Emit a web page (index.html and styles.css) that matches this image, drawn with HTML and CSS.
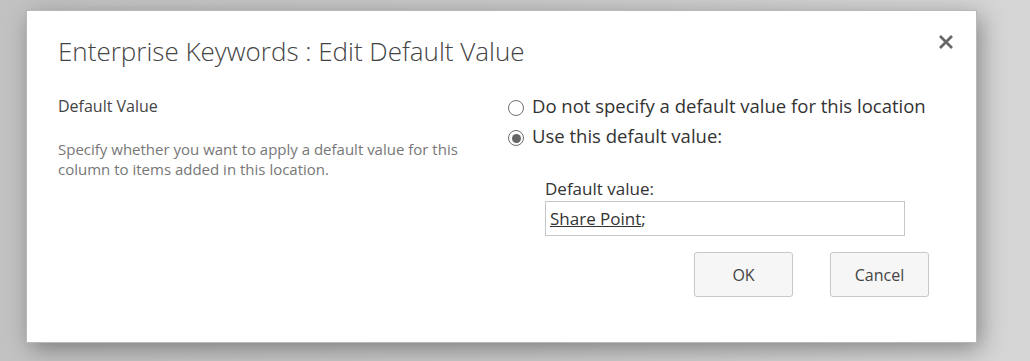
FILE: index.html
```html
<!DOCTYPE html>
<html>
<head>
<meta charset="utf-8">
<link rel="stylesheet" href="styles.css">
</head>
<body>
<div class="page">
  <div class="dialog">
    <div class="header">
      <h1 class="title">Enterprise Keywords : Edit Default Value</h1>
      <button class="close" aria-label="Close">
        <svg width="16" height="16" viewBox="0 0 16 16"><path d="M2 2 L14 14 M14 2 L2 14" stroke="#666" stroke-width="2.8" fill="none"/></svg>
      </button>
    </div>
    <div class="body">
      <div class="left">
        <div class="section-title">Default Value</div>
        <div class="section-desc">Specify whether you want to apply a default value for this column to items added in this location.</div>
      </div>
      <div class="right">
        <label class="radio-row"><span class="radio"></span><span class="radio-label">Do not specify a default value for this location</span></label>
        <label class="radio-row"><span class="radio checked"></span><span class="radio-label">Use this default value:</span></label>
        <div class="field">
          <div class="field-label">Default value:</div>
          <div class="field-input"><span class="token">Share Point</span>;</div>
        </div>
        <div class="buttons">
          <button class="btn">OK</button>
          <button class="btn">Cancel</button>
        </div>
      </div>
    </div>
  </div>
</div>
</body>
</html>
```

FILE: styles.css
```css
html, body {
  margin: 0;
  padding: 0;
}
body {
  background: linear-gradient(90deg, #c2c2c2 0%, #c8c8c8 50%, #d6d6d6 100%);
  width: 1030px;
  height: 361px;
  overflow: hidden;
  font-family: "Open Sans", "Noto Sans", sans-serif;
}
.page {
  padding: 11px 0 0 27px;
}
.dialog {
  width: 949px;
  height: 331px;
  box-sizing: border-box;
  background: #fff;
  box-shadow: 0 0 0 1px #b8b8b8, 4px 6px 22px rgba(0, 0, 0, 0.38);
  padding: 22px 22px 0 31px;
}
.header {
  display: flex;
  justify-content: space-between;
  align-items: flex-start;
}
.title {
  margin: 0;
  font-weight: 300;
  font-size: 26px;
  line-height: 36px;
  color: #444;
}
.close {
  border: none;
  background: none;
  padding: 0;
  margin-top: 1px;
  width: 16px;
  height: 16px;
  display: flex;
}
.body {
  display: flex;
  margin-top: 27px;
}
.left {
  width: 450px;
}
.section-title {
  font-size: 16px;
  line-height: 20px;
  color: #444;
}
.section-desc {
  margin-top: 23px;
  font-size: 15px;
  line-height: 20px;
  color: #777;
  width: 410px;
}
.right {
  display: flex;
  flex-direction: column;
}
.radio-row {
  display: flex;
  align-items: center;
  height: 30px;
  margin-top: -6px;
}
.radio-row + .radio-row {
  margin-top: 0;
}
.radio {
  width: 16px;
  height: 16px;
  border: 1px solid #6f6f6f;
  border-radius: 50%;
  box-sizing: border-box;
  margin-right: 8px;
  margin-top: 6px;
  position: relative;
  flex: none;
}
.radio.checked::after {
  content: "";
  position: absolute;
  left: 2.5px;
  top: 2.5px;
  width: 9px;
  height: 9px;
  border-radius: 50%;
  background: #666;
}
.radio-label {
  font-size: 18.5px;
  color: #333;
}
.field {
  margin-left: 37px;
  margin-top: 27px;
}
.field-label {
  font-size: 17px;
  line-height: 24px;
  color: #333;
}
.field-input {
  width: 360px;
  height: 35px;
  box-sizing: border-box;
  border: 1px solid #c6c6c6;
  padding: 3px 4px;
  font-size: 17px;
  line-height: 27px;
  color: #333;
}
.token {
  text-decoration: underline;
}
.buttons {
  display: flex;
  gap: 37px;
  margin-top: 16px;
  margin-left: 186px;
}
.btn {
  width: 99px;
  height: 45px;
  border: 1px solid #c8c8c8;
  border-radius: 3px;
  background: #f6f6f6;
  font-family: "Open Sans", "Noto Sans", sans-serif;
  font-size: 16px;
  color: #444;
  padding: 0;
}
```
